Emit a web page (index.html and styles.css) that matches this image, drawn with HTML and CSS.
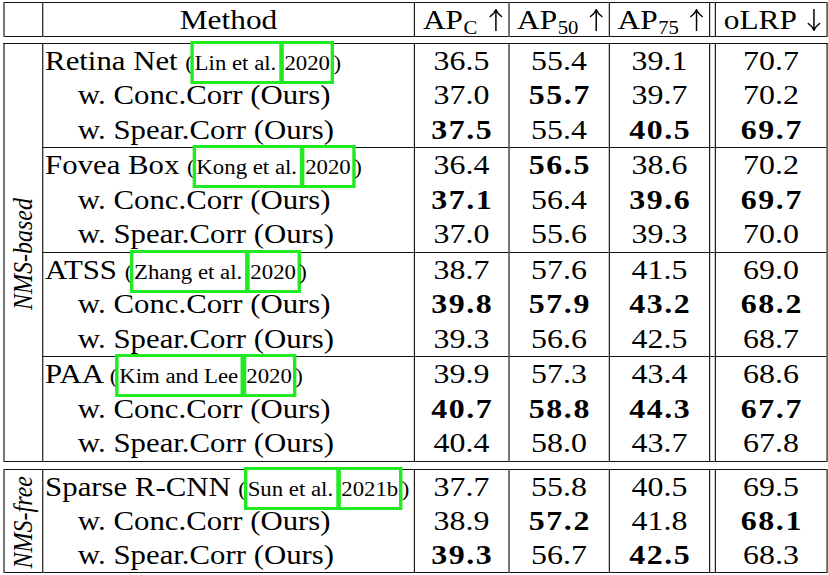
FILE: index.html
```html
<!DOCTYPE html>
<html>
<head>
<meta charset="utf-8">
<title>Results table</title>
<link rel="stylesheet" href="styles.css">
</head>
<body>
<div class="sheet">
  <table class="tbl head">
    <colgroup><col class="c-grp"><col class="c-method"><col class="c-apc"><col class="c-ap50"><col class="c-ap75"><col class="c-gap"><col class="c-olrp"></colgroup>
    <tr>
      <th></th>
      <th class="method">Method</th>
      <th class="num">AP<sub>C</sub> <svg class="arr" viewBox="0 0 12 22" aria-label="↑"><path d="M6 22V1.2M1 7.5C3.4 5.6 5 3.5 6 0.8C7 3.5 8.6 5.6 11 7.5"/></svg></th>
      <th class="num">AP<sub>50</sub> <svg class="arr" viewBox="0 0 12 22" aria-label="↑"><path d="M6 22V1.2M1 7.5C3.4 5.6 5 3.5 6 0.8C7 3.5 8.6 5.6 11 7.5"/></svg></th>
      <th class="num">AP<sub>75</sub> <svg class="arr" viewBox="0 0 12 22" aria-label="↑"><path d="M6 22V1.2M1 7.5C3.4 5.6 5 3.5 6 0.8C7 3.5 8.6 5.6 11 7.5"/></svg></th>
      <th class="gap"></th>
      <th class="num">oLRP <svg class="arr" viewBox="0 0 12 22" aria-label="↓"><path d="M6 0V20.8M1 14.5C3.4 16.4 5 18.5 6 21.2C7 18.5 8.6 16.4 11 14.5"/></svg></th>
    </tr>
  </table>

  <table class="tbl body nms-based">
    <colgroup><col class="c-grp"><col class="c-method"><col class="c-apc"><col class="c-ap50"><col class="c-ap75"><col class="c-gap"><col class="c-olrp"></colgroup>
    <tr class="g">
      <td class="lbl" rowspan="12"><span class="side">NMS-based</span></td>
      <td class="m">Retina Net <span class="cite">(<span class="lnk a">Lin et al.</span><span class="lnk y">2020</span>)</span></td>
      <td>36.5</td><td>55.4</td><td>39.1</td><td class="gap"></td><td>70.7</td>
    </tr>
    <tr>
      <td class="m sub">w. Conc.Corr (Ours)</td>
      <td>37.0</td><td><b>55.7</b></td><td>39.7</td><td class="gap"></td><td>70.2</td>
    </tr>
    <tr>
      <td class="m sub">w. Spear.Corr (Ours)</td>
      <td><b>37.5</b></td><td>55.4</td><td><b>40.5</b></td><td class="gap"></td><td><b>69.7</b></td>
    </tr>
    <tr class="g">
      <td class="m">Fovea Box <span class="cite">(<span class="lnk a">Kong et al.</span><span class="lnk y">2020</span>)</span></td>
      <td>36.4</td><td><b>56.5</b></td><td>38.6</td><td class="gap"></td><td>70.2</td>
    </tr>
    <tr>
      <td class="m sub">w. Conc.Corr (Ours)</td>
      <td><b>37.1</b></td><td>56.4</td><td><b>39.6</b></td><td class="gap"></td><td><b>69.7</b></td>
    </tr>
    <tr>
      <td class="m sub">w. Spear.Corr (Ours)</td>
      <td>37.0</td><td>55.6</td><td>39.3</td><td class="gap"></td><td>70.0</td>
    </tr>
    <tr class="g">
      <td class="m">ATSS <span class="cite">(<span class="lnk a">Zhang et al.</span><span class="lnk y">2020</span>)</span></td>
      <td>38.7</td><td>57.6</td><td>41.5</td><td class="gap"></td><td>69.0</td>
    </tr>
    <tr>
      <td class="m sub">w. Conc.Corr (Ours)</td>
      <td><b>39.8</b></td><td><b>57.9</b></td><td><b>43.2</b></td><td class="gap"></td><td><b>68.2</b></td>
    </tr>
    <tr>
      <td class="m sub">w. Spear.Corr (Ours)</td>
      <td>39.3</td><td>56.6</td><td>42.5</td><td class="gap"></td><td>68.7</td>
    </tr>
    <tr class="g">
      <td class="m">PAA <span class="cite">(<span class="lnk a">Kim and Lee</span><span class="lnk y">2020</span>)</span></td>
      <td>39.9</td><td>57.3</td><td>43.4</td><td class="gap"></td><td>68.6</td>
    </tr>
    <tr>
      <td class="m sub">w. Conc.Corr (Ours)</td>
      <td><b>40.7</b></td><td><b>58.8</b></td><td><b>44.3</b></td><td class="gap"></td><td><b>67.7</b></td>
    </tr>
    <tr>
      <td class="m sub">w. Spear.Corr (Ours)</td>
      <td>40.4</td><td>58.0</td><td>43.7</td><td class="gap"></td><td>67.8</td>
    </tr>
  </table>

  <table class="tbl body nms-free">
    <colgroup><col class="c-grp"><col class="c-method"><col class="c-apc"><col class="c-ap50"><col class="c-ap75"><col class="c-gap"><col class="c-olrp"></colgroup>
    <tr>
      <td class="lbl" rowspan="3"><span class="side">NMS-free</span></td>
      <td class="m">Sparse R-CNN <span class="cite">(<span class="lnk a">Sun et al.</span><span class="lnk y">2021b</span>)</span></td>
      <td>37.7</td><td>55.8</td><td>40.5</td><td class="gap"></td><td>69.5</td>
    </tr>
    <tr>
      <td class="m sub">w. Conc.Corr (Ours)</td>
      <td>38.9</td><td><b>57.2</b></td><td>41.8</td><td class="gap"></td><td><b>68.1</b></td>
    </tr>
    <tr>
      <td class="m sub">w. Spear.Corr (Ours)</td>
      <td><b>39.3</b></td><td>56.7</td><td><b>42.5</b></td><td class="gap"></td><td>68.3</td>
    </tr>
  </table>
</div>
</body>
</html>
```

FILE: styles.css
```css
html, body {
  margin: 0;
  background: #fff;
  font-family: "Liberation Serif", "Times New Roman", serif;
}

.sheet {
  display: flex;
  flex-direction: column;
  align-items: flex-start;
  width: 722px;
  padding: 2px 0 0 2.6px;
  transform: scaleX(1.14);
  transform-origin: 0 0;
  font-family: "Liberation Serif", "Times New Roman", serif;
  color: #000;
}

.tbl {
  border-collapse: collapse;
  table-layout: fixed;
  width: 722px;
  border: 1px solid #111;
  font-family: "Liberation Serif", "Times New Roman", serif;
}

.c-grp { width: 34.2px; }
.c-method { width: 326.3px; }
.c-apc { width: 82.5px; }
.c-ap50 { width: 88.6px; }
.c-ap75 { width: 87.7px; }
.c-gap { width: 5.3px; }
.c-olrp { width: 97.4px; }

.tbl th,
.tbl td {
  border-left: 1px solid #111;
  border-right: 1px solid #111;
  padding: 0;
  white-space: nowrap;
  font-weight: normal;
  text-align: center;
  vertical-align: middle;
  overflow: visible;
}

.head {
  margin-bottom: 5.5px;
}

.head th {
  height: 33px;
  line-height: 33px;
  font-size: 27.5px;
}

.head th.num {
  padding-left: 2px;
}

.head sub {
  font-size: 0.66em;
  line-height: 0;
  vertical-align: -0.26em;
  margin-left: 0.5px;
}

.arr {
  width: 12px;
  height: 22px;
  margin-left: 3px;
  vertical-align: -2px;
  fill: none;
  stroke: #000;
  stroke-width: 1.3;
  stroke-linecap: round;
}

.nms-based {
  margin-bottom: 7px;
}

.body td {
  height: 34.5px;
  line-height: 34.5px;
  font-size: 28px;
}

.nms-free td {
  height: 34.3px;
  line-height: 34.3px;
}

.body tr.g td {
  border-top: 1px solid #111;
}

.body td.m {
  text-align: left;
  font-size: 27px;
  padding-left: 1.8px;
}

.body td.m.sub {
  padding-left: 30.5px;
}

.body td.lbl {
  text-align: center;
  vertical-align: middle;
  line-height: 1;
}

.side {
  display: inline-block;
  writing-mode: vertical-rl;
  transform: translateY(4px) rotate(180deg);
  font-style: italic;
  font-size: 24px;
  line-height: 1;
}

.body b {
  font-weight: bold;
  letter-spacing: 1.4px;
  margin-right: -1.4px;
}

.cite {
  font-size: 20px;
  line-height: 20px;
}

.lnk {
  border: 3px solid #22ea22;
  padding: 8px 1px 7px 0.5px;
  margin-left: -2px;
}

.lnk.a {
  padding-right: 2.4px;
}

.lnk.y {
  margin-left: -1.8px;
  margin-right: -1px;
}
```
